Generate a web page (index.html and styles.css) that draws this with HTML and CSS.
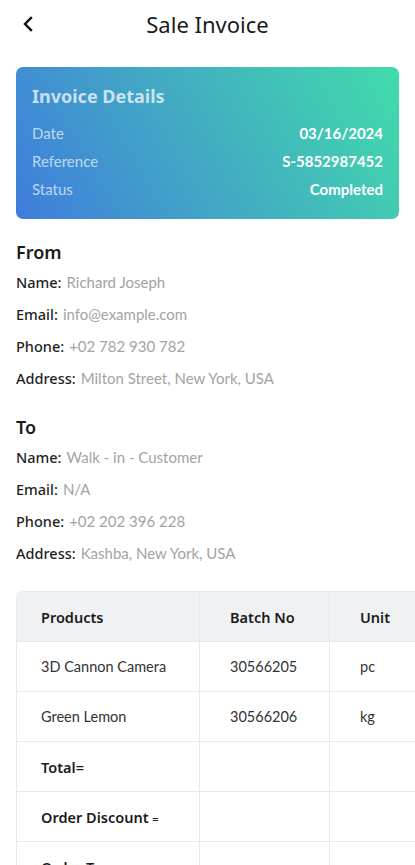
FILE: index.html
```html
<!DOCTYPE html>
<html lang="en">
<head>
<meta charset="utf-8">
<title>Sale Invoice</title>
<link rel="stylesheet" href="styles.css">
</head>
<body>
<div class="page">
  <header class="topbar">
    <button class="back" aria-label="Back">
      <svg width="14" height="16" viewBox="0 0 14 16"><path d="M10 2 L4 8 L10 14" fill="none" stroke="#111" stroke-width="2.4" stroke-linecap="square" stroke-linejoin="miter"/></svg>
    </button>
    <h1 class="title">Sale Invoice</h1>
  </header>

  <section class="card">
    <h2 class="card-title">Invoice Details</h2>
    <div class="card-rows">
      <div class="card-row"><span class="k">Date</span><span class="v">03/16/2024</span></div>
      <div class="card-row"><span class="k">Reference</span><span class="v">S-5852987452</span></div>
      <div class="card-row"><span class="k">Status</span><span class="v">Completed</span></div>
    </div>
  </section>

  <section class="party">
    <h3 class="party-title">From</h3>
    <div class="party-rows">
      <div class="line"><span class="lbl">Name:</span> <span class="val">Richard Joseph</span></div>
      <div class="line"><span class="lbl">Email:</span> <span class="val">info@example.com</span></div>
      <div class="line"><span class="lbl">Phone:</span> <span class="val">+02 782 930 782</span></div>
      <div class="line"><span class="lbl">Address:</span> <span class="val">Milton Street, New York, USA</span></div>
    </div>
  </section>

  <section class="party">
    <h3 class="party-title">To</h3>
    <div class="party-rows">
      <div class="line"><span class="lbl">Name:</span> <span class="val">Walk - in - Customer</span></div>
      <div class="line"><span class="lbl">Email:</span> <span class="val">N/A</span></div>
      <div class="line"><span class="lbl">Phone:</span> <span class="val">+02 202 396 228</span></div>
      <div class="line"><span class="lbl">Address:</span> <span class="val">Kashba, New York, USA</span></div>
    </div>
  </section>

  <div class="table-wrap">
    <table class="items">
      <colgroup><col class="c1"><col class="c2"><col class="c3"></colgroup>
      <thead>
        <tr><th><span>Products</span></th><th><span>Batch No</span></th><th><span>Unit</span></th></tr>
      </thead>
      <tbody>
        <tr><td><span>3D Cannon Camera</span></td><td><span>30566205</span></td><td><span>pc</span></td></tr>
        <tr><td><span>Green Lemon</span></td><td><span>30566206</span></td><td><span>kg</span></td></tr>
        <tr class="sum"><td><span>Total=</span></td><td></td><td></td></tr>
        <tr class="sum"><td><span>Order Discount <small>=</small></span></td><td></td><td></td></tr>
        <tr class="sum"><td><span>Order Tax =</span></td><td></td><td></td></tr>
      </tbody>
    </table>
  </div>
</div>
</body>
</html>
```

FILE: styles.css
```css
* { box-sizing: border-box; }
html, body { margin: 0; padding: 0; background: #fff; }
body {
  font-family: "Lato", "Noto Sans", sans-serif;
  color: #1f1f1f;
  overflow-x: hidden;
}
.page { width: 415px; padding: 0 16px; }

.topbar {
  height: 50px;
  display: flex;
  align-items: center;
  justify-content: center;
  position: relative;
}
.back {
  position: absolute;
  left: 4px;
  top: 15px;
  background: none;
  border: 0;
  padding: 0;
  width: 16px;
  height: 18px;
  display: flex;
  align-items: center;
  justify-content: center;
}
.title {
  margin: 0;
  font-family: "Noto Sans", sans-serif;
  font-weight: 400;
  font-size: 22px;
  line-height: 26px;
  color: #1b1b1b;
  margin-top: -2px;
}

.card {
  margin-top: 17px;
  border-radius: 7px;
  padding: 18px 16px 16px;
  background: linear-gradient(60deg, #3f7cdd 0%, #42a8c4 45%, #41dcaa 100%);
  color: #fff;
}
.card-title {
  margin: 0;
  font-family: "Noto Sans", sans-serif;
  font-weight: 700;
  font-size: 18px;
  line-height: 22px;
  color: rgba(255,255,255,0.72);
}
.card-rows { margin-top: 12px; }
.card-row {
  display: flex;
  justify-content: space-between;
  align-items: center;
  height: 28px;
  font-size: 15px;
}
.card-row .k { color: rgba(255,255,255,0.68); }
.card-row .v { color: #fff; font-weight: 700; }

.party { margin-top: 21px; }
.party-title {
  margin: 0;
  font-family: "Noto Sans", sans-serif;
  font-weight: 600;
  font-size: 18px;
  line-height: 24px;
  color: #1b1b1b;
}
.party-rows { margin-top: 2px; }
.line {
  height: 32px;
  display: flex;
  align-items: center;
  gap: 5px;
  font-size: 15px;
}
.lbl { font-family: "Noto Sans", sans-serif; font-weight: 500; font-size: 14.5px; color: #1f1f1f; }
.val { color: #a3a3a3; }

.table-wrap {
  margin-top: 22px;
  margin-right: -16px;
  overflow: hidden;
}
.items {
  border-collapse: separate;
  border-spacing: 0;
  width: 443px;
  table-layout: fixed;
  border-top: 1px solid #e7e8eb;
  border-left: 1px solid #e7e8eb;
  border-top-left-radius: 8px;
}
.items .c1 { width: 183px; }
.items .c2 { width: 130px; }
.items .c3 { width: 130px; }
.items th, .items td {
  height: 50px;
  padding: 0 0 0 30px;
  text-align: left;
  border-right: 1px solid #e7e8eb;
  border-bottom: 1px solid #e7e8eb;
  font-size: 14.5px;
  vertical-align: middle;
  white-space: nowrap;
}
.items th:first-child, .items td:first-child { padding-left: 24px; }
.items th {
  background: #f0f1f3;
  font-family: "Noto Sans", sans-serif;
  font-weight: 600;
  color: #1b1b1b;
}
.items th:first-child { border-top-left-radius: 8px; }
.items td { color: #333; }
.items tr.sum td:first-child {
  font-family: "Noto Sans", sans-serif;
  font-weight: 600;
  color: #1b1b1b;
}
.items small { font-size: 11px; }
```
